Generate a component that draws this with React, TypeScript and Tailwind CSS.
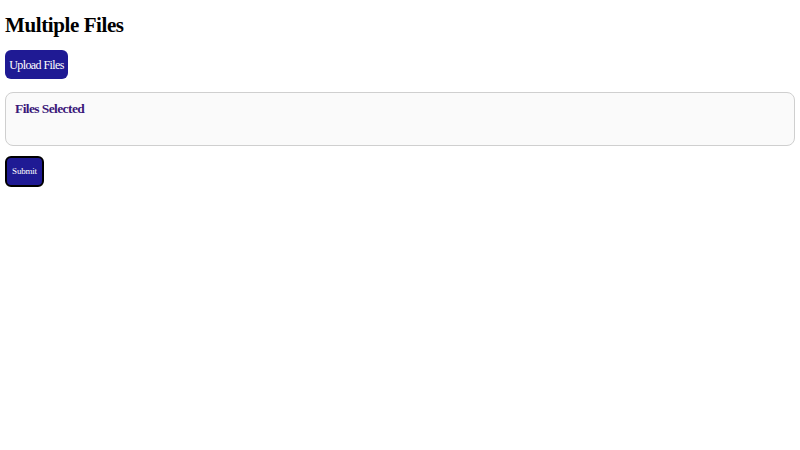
export default function App() {
  return (
    <div className="min-h-screen bg-white px-[5px] pt-[13px] font-['Liberation_Serif',serif] text-black">
      <h1 className="text-[21px] font-bold leading-[24px] tracking-[-0.4px]">Multiple Files</h1>

      <button
        type="button"
        className="mt-[13px] flex h-[29px] w-[63px] items-center justify-center rounded-[6px] bg-[#1f1a94] text-[12px] tracking-[-0.6px] text-white"
      >
        Upload Files
      </button>

      <div className="mt-[13px] h-[54px] rounded-[8px] border border-[#cfcfcf] bg-[#fafafa] px-[9px] pt-[8px]">
        <h3 className="text-[13.5px] font-bold leading-[16px] tracking-[-0.6px] text-[#3b1879]">Files Selected</h3>
      </div>

      <button
        type="button"
        className="mt-[10px] flex h-[31px] w-[39px] items-center justify-center rounded-[6px] border-2 border-black bg-[#1f1a94] text-[9px] tracking-[-0.2px] text-white"
      >
        Submit
      </button>
    </div>
  );
}
